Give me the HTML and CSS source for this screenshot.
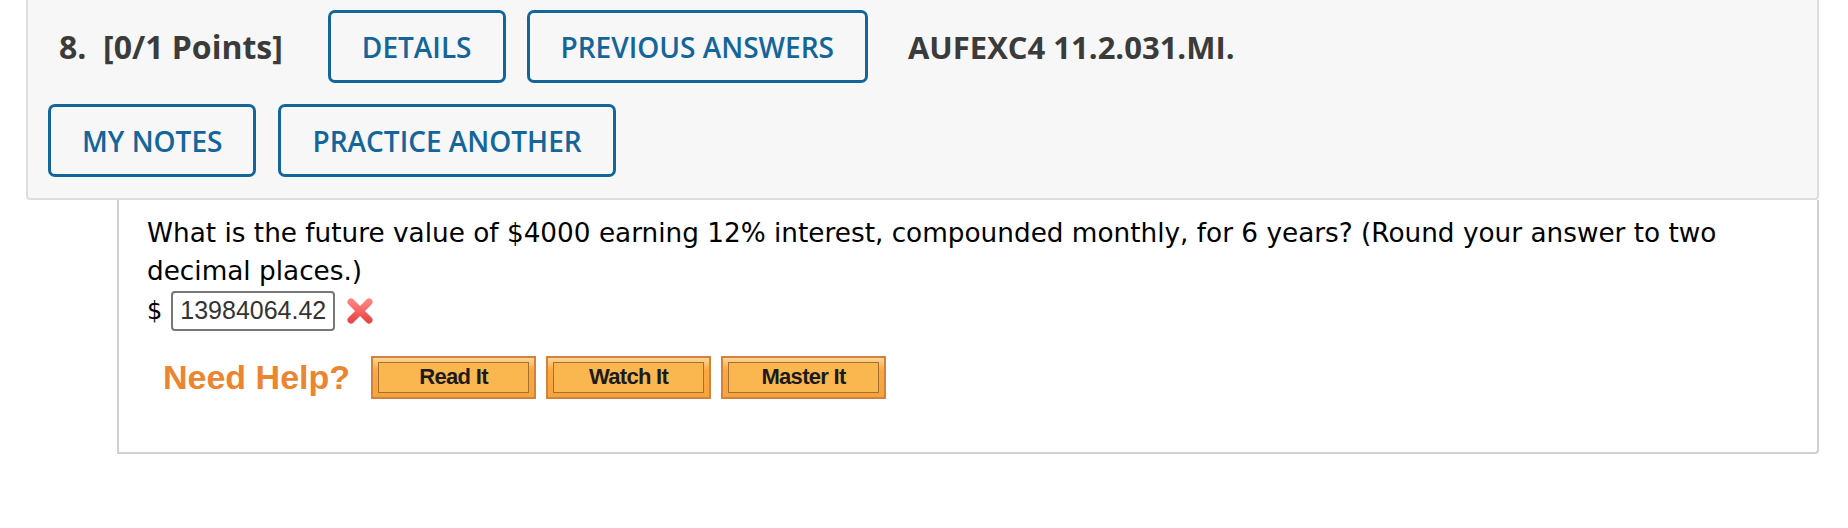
FILE: index.html
```html
<!DOCTYPE html>
<html lang="en">
<head>
    <meta charset="UTF-8">
    <meta name="viewport" content="width=device-width, initial-scale=1.0">
    <title>Question 8</title>
    <link rel="stylesheet" href="styles.css">
</head>
<body>
    <div class="question-header">
        <div class="header-row">
            <span class="question-title">8.&nbsp; [0/1 Points]</span>
            <button class="outline-btn details-btn">DETAILS</button>
            <button class="outline-btn">PREVIOUS ANSWERS</button>
            <span class="question-code">AUFEXC4 11.2.031.MI.</span>
        </div>
        <div class="header-row second-row">
            <button class="outline-btn">MY NOTES</button>
            <button class="outline-btn">PRACTICE ANOTHER</button>
        </div>
    </div>

    <div class="question-body">
        <p class="question-text">What is the future value of $4000 earning 12% interest, compounded monthly, for 6 years? (Round your answer to two decimal places.)</p>
        <div class="answer-row">
            <span class="dollar">$</span>
            <input type="text" class="answer-input" value="13984064.42">
            <svg class="wrong-icon" width="30" height="28" viewBox="0 0 30 28">
                <defs>
                    <linearGradient id="xred" x1="0" y1="0" x2="0" y2="1">
                        <stop offset="0" stop-color="#ff8080"/>
                        <stop offset="1" stop-color="#e84848"/>
                    </linearGradient>
                </defs>
                <path d="M6 5 L24 23 M24 5 L6 23" stroke="url(#xred)" stroke-width="7" stroke-linecap="round"/>
            </svg>
        </div>
        <div class="help-row">
            <span class="need-help">Need Help?</span>
            <button class="help-btn"><span>Read It</span></button>
            <button class="help-btn"><span>Watch It</span></button>
            <button class="help-btn"><span>Master It</span></button>
        </div>
    </div>
</body>
</html>
```

FILE: styles.css
```css
body {
    margin: 0;
    padding: 0;
    background-color: #fff;
    font-family: "Open Sans", Arial, sans-serif;
}
.question-header {
    margin-left: 26px;
    width: 1793px;
    padding: 10px 0 21px 20px;
    background-color: #f7f7f7;
    border: 2px solid #dedede;
    border-top: none;
    border-radius: 0 0 4px 4px;
    box-sizing: border-box;
}
.header-row {
    display: flex;
    align-items: center;
}
.second-row {
    margin-top: 21px;
    gap: 22px;
}
.question-title {
    margin-left: 11px;
    margin-right: 45px;
    font-size: 32px;
    font-weight: 700;
    color: #3b3b3b;
}
.question-code {
    margin-left: 40px;
    font-size: 31px;
    font-weight: 700;
    color: #3b3b3b;
}
.outline-btn {
    height: 73px;
    padding: 0 31px;
    background: transparent;
    border: 3px solid #13659a;
    border-radius: 7px;
    color: #13659a;
    font-family: "Open Sans", Arial, sans-serif;
    font-size: 28px;
    font-weight: 600;
    cursor: pointer;
}
.details-btn {
    margin-right: 21px;
}
.question-body {
    margin-left: 117px;
    width: 1702px;
    padding: 14px 28px 53px 28px;
    border: 2px solid #d0d0d0;
    border-top: none;
    border-radius: 0 0 4px 0;
    box-sizing: border-box;
    font-family: "DejaVu Sans", Verdana, sans-serif;
    font-size: 26.3px;
    color: #000;
}
.question-text {
    margin: 0;
    line-height: 38px;
}
.answer-row {
    display: flex;
    align-items: center;
    height: 41px;
}
.dollar {
    margin-right: 9px;
    font-size: 24px;
}
.answer-input {
    width: 164px;
    height: 40px;
    padding: 0 2px 0 7px;
    border: 2px solid #777;
    border-radius: 4px;
    box-sizing: border-box;
    font-family: "Liberation Sans", Arial, sans-serif;
    font-size: 25px;
    color: #333;
}
.wrong-icon {
    margin-left: 10px;
}
.help-row {
    display: flex;
    align-items: center;
    gap: 10px;
    margin-top: 25px;
    margin-left: 16px;
}
.need-help {
    margin-right: 11px;
    font-family: "Liberation Sans", Arial, sans-serif;
    font-size: 34px;
    font-weight: 700;
    color: #ec8530;
}
.help-btn {
    width: 165px;
    height: 43px;
    padding: 4px 5px;
    background: linear-gradient(#fdd79a, #f9a944 30%, #f7a33e);
    border: 2px solid #d3823a;
    cursor: pointer;
}
.help-btn span {
    display: block;
    height: 100%;
    box-sizing: border-box;
    border: 1px solid #a8702f;
    background-color: #fbb74f;
    font-family: "Liberation Sans", Arial, sans-serif;
    font-size: 22px;
    font-weight: 700;
    letter-spacing: -0.7px;
    line-height: 28px;
    color: #1b1b1b;
}
```
